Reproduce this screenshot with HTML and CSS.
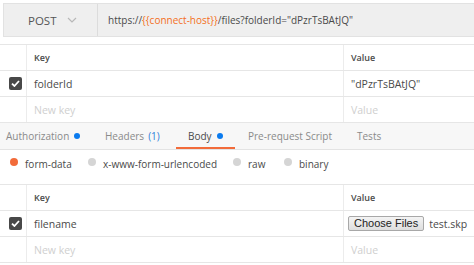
FILE: index.html
```html
<!DOCTYPE html>
<html>
<head>
<meta charset="utf-8">
<link rel="stylesheet" href="styles.css">
</head>
<body>
<div class="urlbar">
  <div class="method">POST
    <svg class="chev" width="10" height="6" viewBox="0 0 10 6"><path d="M1 1 L5 5 L9 1" fill="none" stroke="#b8b8b8" stroke-width="1.2"/></svg>
  </div>
  <div class="url">https://<span class="var">{{connect-host}}</span>/files?folderId="dPzrTsBAtJQ"</div>
</div>

<div class="table t1">
  <div class="row head"><div class="c0"></div><div class="c1">Key</div><div class="c2">Value</div></div>
  <div class="row"><div class="c0"><span class="chk"><svg width="9" height="7" viewBox="0 0 9 7"><path d="M1 3.6 L3.4 6 L8 1" fill="none" stroke="#fff" stroke-width="1.8"/></svg></span></div><div class="c1">folderId</div><div class="c2">"dPzrTsBAtJQ"</div></div>
  <div class="row"><div class="c0"></div><div class="c1 ph">New key</div><div class="c2 ph">Value</div></div>
</div>

<div class="tabs">
  <div class="tab">Authorization <span class="dot"></span></div>
  <div class="tab">Headers <span class="cnt">(1)</span></div>
  <div class="tab active">Body <span class="dot"></span></div>
  <div class="tab">Pre-request Script</div>
  <div class="tab">Tests</div>
</div>

<div class="radios">
  <div class="radio"><span class="rb on"></span>form-data</div>
  <div class="radio"><span class="rb"></span>x-www-form-urlencoded</div>
  <div class="radio"><span class="rb"></span>raw</div>
  <div class="radio"><span class="rb"></span>binary</div>
</div>

<div class="table t2">
  <div class="row head"><div class="c0"></div><div class="c1">Key</div><div class="c2">Value</div></div>
  <div class="row"><div class="c0"><span class="chk"><svg width="9" height="7" viewBox="0 0 9 7"><path d="M1 3.6 L3.4 6 L8 1" fill="none" stroke="#fff" stroke-width="1.8"/></svg></span></div><div class="c1">filename</div><div class="c2"><span class="btn">Choose Files</span><span class="fname">test.skp</span></div></div>
  <div class="row"><div class="c0"></div><div class="c1 ph">New key</div><div class="c2 ph">Value</div></div>
</div>
</body>
</html>
```

FILE: styles.css
```css
* { box-sizing: border-box; }
body {
  margin: 0;
  background: #fff;
  font-family: "Open Sans", "Noto Sans", sans-serif;
  font-size: 10px;
  color: #4a4a4a;
  width: 474px;
  height: 265px;
  overflow: hidden;
}
.urlbar {
  margin: 3px 0 0 3px;
  height: 34px;
  display: flex;
  background: #efefef;
  border: 1px solid #e2e2e2;
  border-right: none;
}
.method {
  width: 94px;
  display: flex;
  align-items: center;
  padding-left: 24px;
  font-size: 11.5px;
  color: #555;
  border-right: 1px solid #dcdcdc;
}
.chev { margin-left: 10px; }
.url {
  flex: 1;
  display: flex;
  align-items: center;
  padding-left: 10px;
  font-size: 10px;
  color: #4a4a4a;
  white-space: nowrap;
}
.var { color: #f47023; }
.table { border-top: 1px solid #e6e6e6; }
.t1 { margin-top: 7px; }
.row {
  display: grid;
  grid-template-columns: 27px 317px 130px;
  height: 26px;
  border-bottom: 1px solid #e6e6e6;
}
.row > div { display: flex; align-items: center; white-space: nowrap; }
.c0 { justify-content: center; padding-left: 5px; border-right: 1px solid #ececec; }
.c1 { padding-left: 7px; border-right: 1px solid #ececec; font-size: 10.5px; }
.c2 { padding-left: 7px; font-size: 10.5px; }
.head .c1, .head .c2 { font-size: 9px; font-weight: 600; color: #4a4a4a; }
.ph { color: #cfcfcf; }
.chk {
  width: 13px;
  height: 13px;
  border-radius: 2px;
  background: #484848;
  display: flex;
  align-items: center;
  justify-content: center;
}
.tabs {
  height: 27px;
  background: #f7f7f7;
  border-bottom: 1px solid #e3e3e3;
  display: flex;
  padding-left: 6px;
}
.tab {
  display: flex;
  align-items: center;
  color: #8a8a8a;
  font-size: 10px;
  white-space: nowrap;
  position: relative;
}
.tab:nth-child(1) { width: 99px; }
.tab:nth-child(2) { width: 83px; }
.tab:nth-child(3) { width: 60px; }
.tab:nth-child(4) { width: 109px; }
.tab.active { color: #4a4a4a; }
.tab.active::after {
  content: "";
  position: absolute;
  left: -12px;
  width: 59px;
  bottom: 0;
  height: 2px;
  background: #f26b3a;
}
.dot {
  width: 6px;
  height: 6px;
  border-radius: 50%;
  background: #0a7bef;
  margin-left: 5px;
}
.cnt { color: #2f7fd9; margin-left: 4px; }
.radios {
  height: 34px;
  display: flex;
  align-items: flex-start;
  padding: 7px 0 0 10px;
  font-size: 10px;
  color: #4a4a4a;
}
.radio { display: flex; align-items: center; }
.radio:nth-child(1) { width: 78px; }
.radio:nth-child(2) { width: 145px; }
.radio:nth-child(3) { width: 51px; }
.rb {
  width: 8px;
  height: 8px;
  border-radius: 50%;
  background: #d5d5d5;
  margin-right: 7px;
  margin-top: -4px;
}
.rb.on { background: #f26b3a; }
.btn {
  flex-shrink: 0;
  font-family: "Liberation Sans", Arial, sans-serif;
  font-size: 11px;
  color: #222;
  border: 1px solid #a8a8a8;
  border-radius: 2px;
  background: linear-gradient(#f4f4f4, #dedede);
  padding: 0 5px;
  height: 15px;
  line-height: 13px;
  margin-left: -3px;
}
.fname { margin-left: 5px; }
```
